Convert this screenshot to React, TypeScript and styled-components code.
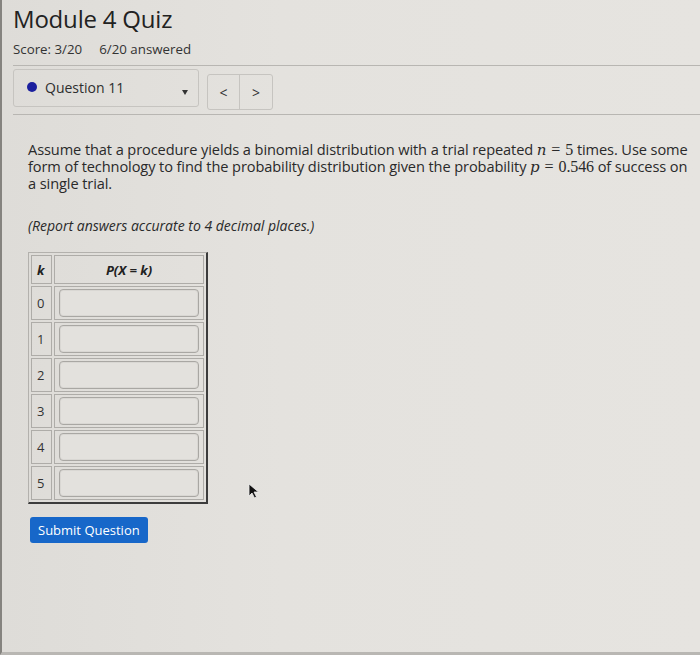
import React from "react";
import styled, { createGlobalStyle } from "styled-components";

const GlobalStyle = createGlobalStyle`
  html, body { margin: 0; padding: 0; }
  body {
    background: #e2e0dc;
    font-family: "Open Sans", "Noto Sans", sans-serif;
    color: #2b2b2b;
  }
`;

const Page = styled.div`
  position: relative;
  box-sizing: border-box;
  height: 655px;
  overflow: hidden;
  border-left: 2px solid #85837f;
  border-bottom: 3px solid #b9b7b3;
  padding: 0 0 0 11px;
  background: linear-gradient(90deg, #dedcd8 0%, #e4e2de 40%, #e6e4e0 100%);
`;

const Title = styled.h1`
  margin: 0;
  padding-top: 3px;
  font-size: 24px;
  font-weight: 400;
  line-height: 32px;
  color: #222;
  letter-spacing: -0.2px;
`;

const ScoreRow = styled.div`
  display: flex;
  gap: 17px;
  margin-top: 4px;
  font-size: 13.3px;
  line-height: 20px;
  color: #333;
`;

const Rule = styled.hr<{ $top: number }>`
  margin: ${(p) => p.$top}px 0 0 0;
  border: 0;
  border-top: 1px solid #b8b6b2;
  height: 0;
`;

const NavBar = styled.div`
  display: flex;
  align-items: flex-start;
  gap: 8px;
  margin-top: 3px;
`;

const Select = styled.div`
  box-sizing: border-box;
  width: 186px;
  height: 38px;
  border: 1px solid #c6c4c0;
  border-radius: 3px;
  display: flex;
  align-items: center;
  padding: 0 10px 0 13px;
  font-size: 14px;
  color: #2e2e2e;
`;

const Dot = styled.span`
  width: 10px;
  height: 10px;
  border-radius: 50%;
  background: #1b1f9e;
  margin-right: 8px;
  margin-top: -2px;
`;

const SelectLabel = styled.span`
  flex: 1;
  margin-top: -1px;
`;

const Caret = styled.span`
  width: 0;
  height: 0;
  border-left: 3.5px solid transparent;
  border-right: 3.5px solid transparent;
  border-top: 5px solid #333;
  margin-top: 8px;
`;

const ArrowGroup = styled.div`
  display: flex;
  margin-top: 5px;
  border: 1px solid #c6c4c0;
  border-radius: 3px;
  height: 36px;
  box-sizing: border-box;
`;

const ArrowBtn = styled.button<{ $first?: boolean }>`
  width: 32px;
  height: 34px;
  border: 0;
  border-right: ${(p) => (p.$first ? "1px solid #c6c4c0" : "0")};
  background: transparent;
  font-family: "Open Sans", sans-serif;
  font-size: 14px;
  color: #333;
  padding: 0;
  display: flex;
  align-items: center;
  justify-content: center;
`;

const Content = styled.div`
  padding-left: 15px;
  width: 666px;
`;

const Prompt = styled.p`
  margin: 26px 0 0 0;
  font-size: 14.6px;
  line-height: 17px;
  color: #2a2a2a;
  letter-spacing: -0.1px;
`;

const MathVar = styled.span`
  font-family: "DejaVu Serif", "Liberation Serif", serif;
  font-style: italic;
  font-size: 15px;
  line-height: 1;
`;

const MathNum = styled.span`
  font-family: "Liberation Serif", "DejaVu Serif", serif;
  font-size: 16px;
  line-height: 1;
`;

const MathOp = styled.span`
  font-family: "Liberation Serif", serif;
  font-size: 16px;
  line-height: 1;
  margin: 0 5px;
`;

const Note = styled.p`
  margin: 25px 0 0 0;
  font-size: 14px;
  font-style: italic;
  color: #2a2a2a;
  line-height: 18px;
`;

const Table = styled.table`
  margin-top: 17px;
  border-collapse: separate;
  border-spacing: 2px;
  border-top: 1px solid #b3b1ad;
  border-left: 1px solid #b3b1ad;
  border-right: 2px solid #3c3c3c;
  border-bottom: 2px solid #3c3c3c;
  width: 180px;
`;

const HeadCell = styled.th<{ $w?: number }>`
  border: 1px solid #aeaca8;
  height: 27px;
  padding: 0;
  font-size: 13px;
  font-style: italic;
  font-weight: 700;
  color: #222;
  text-align: center;
  width: ${(p) => (p.$w ? `${p.$w}px` : "auto")};
`;

const KHead = styled(HeadCell)`
  text-align: left;
  padding-left: 5px;
`;

const KCell = styled.td`
  border: 1px solid #aeaca8;
  padding: 0 0 0 5px;
  height: 32px;
  font-size: 13px;
  color: #333;
`;

const ValCell = styled.td`
  border: 1px solid #aeaca8;
  padding: 2px 4px 2px 4px;
`;

const Input = styled.input`
  box-sizing: border-box;
  display: block;
  width: 100%;
  height: 28px;
  border: 1px solid #a9a7a3;
  border-radius: 4px;
  box-shadow: inset 0 0 0 1px #d9d7d3;
  background: #e3e1dd;
  outline: none;
`;

const Submit = styled.button`
  margin: 13px 0 0 2px;
  height: 26px;
  padding: 0 8px;
  border: 0;
  border-radius: 3px;
  background: #1767c9;
  color: #fff;
  font-family: "Open Sans", sans-serif;
  font-size: 13px;
  font-weight: 500;
`;

const Cursor = styled.svg`
  position: absolute;
  left: 246px;
  top: 483px;
`;

const rows = [0, 1, 2, 3, 4, 5];

export default function App() {
  return (
    <>
      <GlobalStyle />
      <Page>
        <Title>Module 4 Quiz</Title>
        <ScoreRow>
          <span>Score: 3/20</span>
          <span>6/20 answered</span>
        </ScoreRow>
        <Rule $top={6} />
        <NavBar>
          <Select>
            <Dot />
            <SelectLabel>Question 11</SelectLabel>
            <Caret />
          </Select>
          <ArrowGroup>
            <ArrowBtn $first>&lt;</ArrowBtn>
            <ArrowBtn>&gt;</ArrowBtn>
          </ArrowGroup>
        </NavBar>
        <Rule $top={4} />
        <Content>
          <Prompt>
            Assume that a procedure yields a binomial distribution with a trial repeated{" "}
            <MathVar>n</MathVar>
            <MathOp>=</MathOp>
            <MathNum>5</MathNum> times. Use some form of technology to find the probability
            distribution given the probability <MathVar>p</MathVar>
            <MathOp>=</MathOp>
            <MathNum>0.546</MathNum> of success on a single trial.
          </Prompt>
          <Note>(Report answers accurate to 4 decimal places.)</Note>
          <Table>
            <thead>
              <tr>
                <KHead $w={14}>k</KHead>
                <HeadCell>P(X = k)</HeadCell>
              </tr>
            </thead>
            <tbody>
              {rows.map((k) => (
                <tr key={k}>
                  <KCell>{k}</KCell>
                  <ValCell>
                    <Input aria-label={`P(X = ${k})`} />
                  </ValCell>
                </tr>
              ))}
            </tbody>
          </Table>
          <Submit>Submit Question</Submit>
        </Content>
        <Cursor width="12" height="16" viewBox="0 0 12 16">
          <path d="M1 1 L1 13 L4 10 L6.5 15 L8.5 14 L6 9 L10.5 9 Z" fill="#111" stroke="#eee" strokeWidth="0.8" />
        </Cursor>
      </Page>
    </>
  );
}
